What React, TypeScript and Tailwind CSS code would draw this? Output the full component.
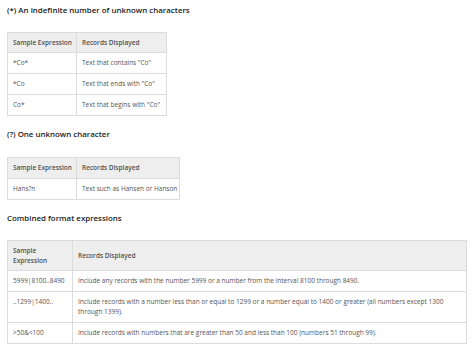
import React from "react";

type Row = [string, string];

function Table({ rows, w, header, col1, headerH, nowrap }: { rows: Row[]; w: string; header: [string, string]; col1: string; headerH: string; nowrap?: boolean }) {
  return (
    <table className={`${w} border-collapse border border-[#dcdcdc] table-fixed ${nowrap ? "whitespace-nowrap" : ""}`}>
      <colgroup>
        <col className={col1} />
        <col />
      </colgroup>
      <thead>
        <tr className={`bg-[#eeeeee] ${headerH}`}>
          {header.map((h, i) => (
            <th key={i} className="border border-[#dcdcdc] pl-[5px] pr-[3px] py-0 text-left font-semibold text-[#505050] leading-[10px] align-middle">
              {h}
            </th>
          ))}
        </tr>
      </thead>
      <tbody>
        {rows.map((r, i) => (
          <tr key={i}>
            {r.map((c, j) => (
              <td key={j} className="border border-[#dcdcdc] pl-[5px] pr-[3px] py-[5px] text-[#555] leading-[10px] align-top h-[21px]">
                {c}
              </td>
            ))}
          </tr>
        ))}
      </tbody>
    </table>
  );
}

export default function App() {
  return (
    <div className="w-[474px] h-[350px] bg-white overflow-hidden px-[7px] pt-[4px] text-[6.5px]" style={{ fontFamily: '"Open Sans", sans-serif' }}>
      <h2 className="text-[7.9px] font-semibold text-[#222] leading-[12px]">(*) An indefinite number of unknown characters</h2>
      <div className="mt-[16px]">
        <Table
          w="w-[160px]"
          col1="w-[69px]"
          headerH="h-[20px]"
          nowrap
          header={["Sample Expression", "Records Displayed"]}
          rows={[
            ["*Co*", 'Text that contains "Co"'],
            ["*Co", 'Text that ends with "Co"'],
            ["Co*", 'Text that begins with "Co"'],
          ]}
        />
      </div>
      <h2 className="mt-[12px] text-[7.9px] font-semibold text-[#222] leading-[12px]">(?) One unknown character</h2>
      <div className="mt-[17px]">
        <Table
          w="w-[173px]"
          col1="w-[69px]"
          headerH="h-[21px]"
          nowrap
          header={["Sample Expression", "Records Displayed"]}
          rows={[["Hans?n", "Text such as Hansen or Hanson"]]}
        />
      </div>
      <h2 className="mt-[12px] text-[7.9px] font-semibold text-[#222] leading-[12px]">Combined format expressions</h2>
      <div className="mt-[16px]">
        <Table
          w="w-[460px]"
          col1="w-[65px]"
          headerH="h-[30px]"
          header={["Sample Expression", "Records Displayed"]}
          rows={[
            ["5999|8100..8490", "Include any records with the number 5999 or a number from the interval 8100 through 8490."],
            ["..1299|1400..", "Include records with a number less than or equal to 1299 or a number equal to 1400 or greater (all numbers except 1300 through 1399)."],
            [">50&<100", "Include records with numbers that are greater than 50 and less than 100 (numbers 51 through 99)."],
          ]}
        />
      </div>
    </div>
  );
}
